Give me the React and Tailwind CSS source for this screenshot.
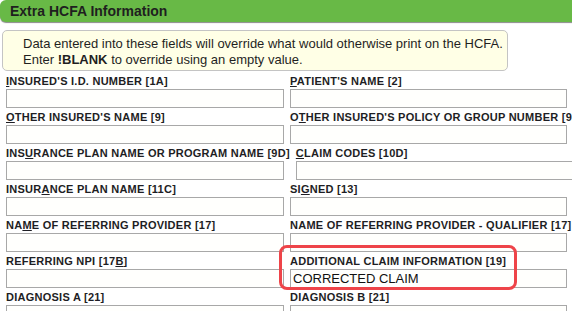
import React from 'react';

// label parts: [before, underlined, after]
const rows = [
  [
    { pre: '', key: 'I', post: "NSURED'S I.D. NUMBER [1A]" },
    { pre: '', key: 'P', post: "ATIENT'S NAME [2]" },
  ],
  [
    { pre: '', key: 'O', post: "THER INSURED'S NAME [9]" },
    { pre: 'O', key: 'T', post: "HER INSURED'S POLICY OR GROUP NUMBER [9A]" },
  ],
  [
    { pre: 'INS', key: 'U', post: 'RANCE PLAN NAME OR PROGRAM NAME [9D]' },
    { pre: '', key: 'C', post: 'LAIM CODES [10D]' },
  ],
  [
    { pre: 'INSUR', key: 'A', post: 'NCE PLAN NAME [11C]' },
    { pre: 'SI', key: 'G', post: 'NED [13]' },
  ],
  [
    { pre: 'NA', key: 'M', post: 'E OF REFERRING PROVIDER [17]' },
    { pre: 'NAME OF REFERRING PROVIDER - QUALIFIER [17]', key: '', post: '' },
  ],
  [
    { pre: 'REFERRING NPI [17', key: 'B', post: ']' },
    { pre: 'ADDITIONAL CLAIM INFORMATION [19]', key: '', post: '', value: 'CORRECTED CLAIM' },
  ],
  [
    { pre: 'DIAGNOSIS A [21]', key: '', post: '' },
    { pre: 'DIAGNOSIS B [21]', key: '', post: '' },
  ],
];

const Field = ({ field, wide }) => (
  <div className={`flex flex-col shrink-0 ${wide ? 'min-w-[278px]' : 'min-w-[277px]'}`}>
    <div className="h-[16px] leading-[16px] text-[11px] font-bold tracking-[0.25px] text-[#1e1e24] whitespace-nowrap">
      {field.pre}
      {field.key && <u className="underline-offset-[1px]">{field.key}</u>}
      {field.post}
    </div>
    <div
      className={`h-[19px] border border-[#a8a8a8] bg-[#fffffd] pl-[2px] text-[13px] leading-[17px] text-[#111] whitespace-nowrap ${
        wide ? 'w-[278px]' : 'w-[277px]'
      }`}
    >
      {field.value || ''}
    </div>
  </div>
);

export default function App() {
  return (
    <div className="relative w-[572px] h-[311px] overflow-hidden bg-white font-['Liberation_Sans',Arial,sans-serif]">
      <div className="h-[22px] w-[600px] rounded-l-[6px] bg-[#68b946] pl-[10px] text-[14px] font-bold leading-[22px] text-[#1f1f1f] shadow-[0_1px_1px_#8a8a8a]">
        Extra HCFA Information
      </div>

      <div className="mt-[8px] ml-[2px] h-[41px] w-[506px] rounded-[5px] border border-[#c4c4c4] bg-[#ffffe6] pl-[20px] pt-[5px] text-[13px] leading-[16px] text-[#1f1f1f]">
        <div>Data entered into these fields will override what would otherwise print on the HCFA.</div>
        <div>
          Enter <span className="font-bold">!BLANK</span> to override using an empty value.
        </div>
      </div>

      <div className="mt-[2px] pl-[6px]">
        {rows.map((row, i) => (
          <div key={i} className="flex gap-[6px] mb-[1px]">
            <Field field={row[0]} wide />
            <Field field={row[1]} />
          </div>
        ))}
      </div>

      <div className="absolute left-[279px] top-[245px] h-[45px] w-[238px] rounded-[8px] border-[3px] border-[#ee4449]" />
    </div>
  );
}
